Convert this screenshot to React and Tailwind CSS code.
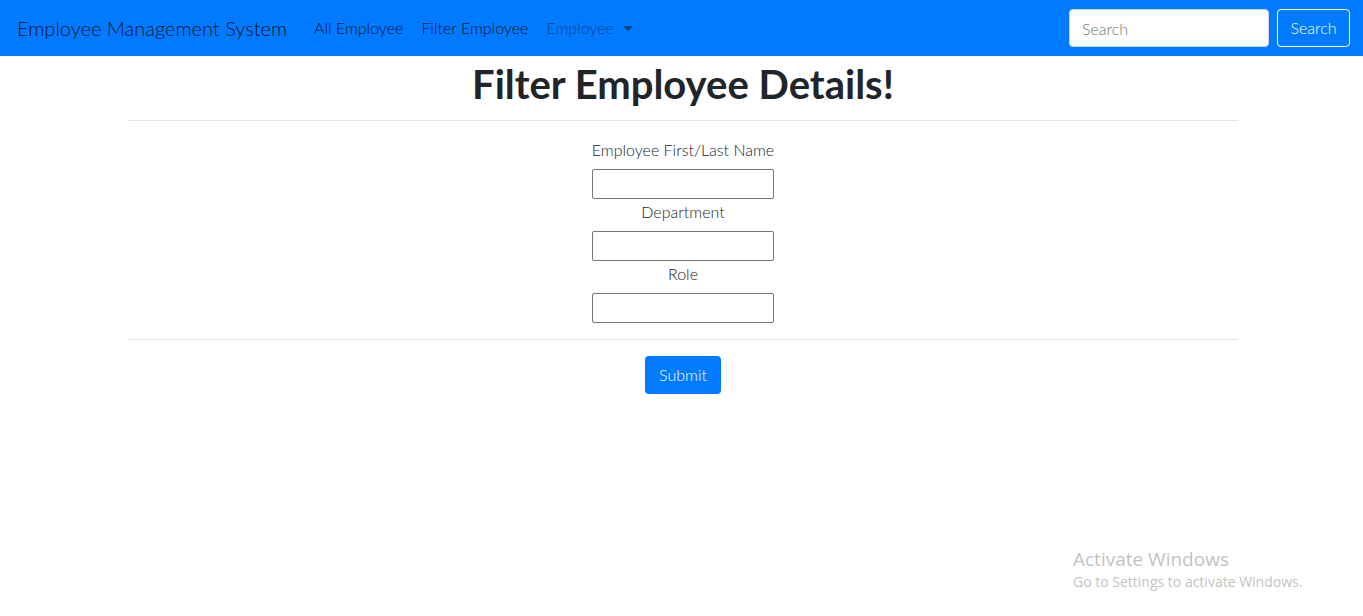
export default function App() {
  return (
    <div className="relative min-h-[616px] bg-white font-light text-[#212529]" style={{ fontFamily: 'Lato, "Open Sans", sans-serif' }}>
      <nav className="flex h-14 items-center bg-[#007bff] pl-[17px] pr-[13px]">
        <span className="mr-[18px] text-[20px] leading-[30px] text-black/90">Employee Management System</span>
        <ul className="flex items-center">
          <li className="px-[9px] text-[16px] text-black/90">All Employee</li>
          <li className="px-[9px] text-[16px] text-black/90">Filter Employee</li>
          <li className="flex items-center px-[9px] text-[16px] text-black/50">
            Employee
            <span className="ml-[9px] inline-block h-0 w-0 border-x-[5px] border-t-[5px] border-x-transparent border-t-black/50" />
          </li>
        </ul>
        <form className="ml-auto flex items-center gap-2">
          <input
            placeholder="Search"
            className="h-[38px] w-[200px] rounded-[4px] border border-[#ced4da] bg-white px-3 text-[16px] font-light text-[#495057] placeholder:text-[#6c757d] outline-none"
          />
          <button type="button" className="h-[38px] w-[73px] rounded-[4px] border border-white text-[16px] font-light text-white">
            Search
          </button>
        </form>
      </nav>

      <div className="pl-[3px]">
        <div className="mx-auto w-[1110px]">
          <h1 className="text-center text-[40px] font-bold leading-[56px]">Filter Employee Details!</h1>
          <hr className="mt-2 border-t border-black/10" />
          <div className="mt-[16px] flex flex-col items-center">
            <label className="text-[16px] leading-[25px]">Employee First/Last Name</label>
            <input className="mt-[7px] h-[30px] w-[182px] rounded-[2px] border border-[#767676] outline-none" />
            <label className="text-[16px] leading-[25px]">Department</label>
            <input className="mt-[7px] h-[30px] w-[182px] rounded-[2px] border border-[#767676] outline-none" />
            <label className="text-[16px] leading-[25px]">Role</label>
            <input className="mt-[7px] h-[30px] w-[182px] rounded-[2px] border border-[#767676] outline-none" />
          </div>
          <hr className="mt-4 border-t border-black/10" />
          <div className="mt-4 flex justify-center">
            <button type="button" className="h-[38px] w-[76px] rounded-[4px] bg-[#007bff] text-[16px] font-light text-white">
              Submit
            </button>
          </div>
        </div>
      </div>

      <div className="absolute left-[1073px] top-[546px] font-normal text-[#c3c3c3]" style={{ fontFamily: '"Open Sans", sans-serif' }}>
        <div className="text-[19px] leading-[26px]">Activate Windows</div>
        <div className="text-[14px] leading-[20px]">Go to Settings to activate Windows.</div>
      </div>
    </div>
  );
}
